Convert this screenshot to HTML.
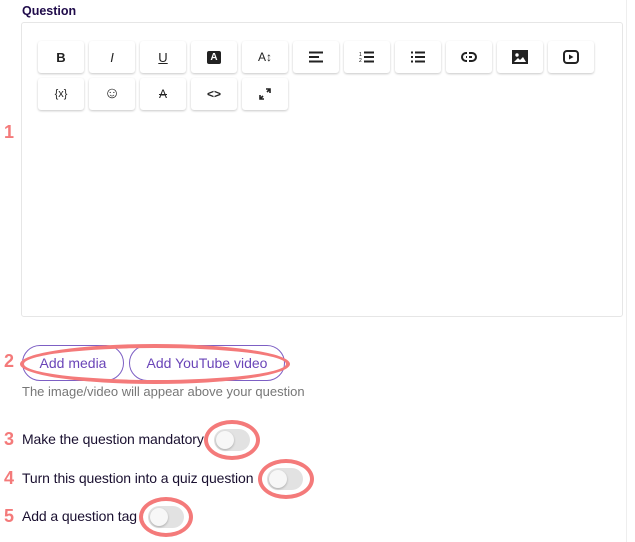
<!DOCTYPE html>
<html><head><style>
body{margin:0;width:635px;height:542px;background:#fff;font-family:"Liberation Sans",Arial,sans-serif;position:relative;overflow:hidden}
.a{position:absolute}
.lbl{left:22px;top:4px;font-weight:bold;font-size:12.5px;color:#1f0b4a}
.box{left:21px;top:22px;width:600px;height:293px;border:1px solid #e6e6e6;border-radius:3px}
.b{position:absolute;width:46px;height:32px;background:#fff;border-radius:3px;box-shadow:0 1px 2px rgba(0,0,0,.22);display:flex;align-items:center;justify-content:center;font-size:13px;color:#222}
.num{color:#f47a7a;font-weight:bold;font-size:18px;left:4px}
.pill{border:1px solid #7d5fc4;border-radius:18px;height:34px;color:#6a45b8;font-size:14px;display:flex;align-items:center;justify-content:center;top:345px}
.t{font-size:14px;color:#1a1030;left:22px;letter-spacing:-0.1px}
.tg{width:36px;height:22px;background:#e2e2e2;border-radius:11px}
.tg::after{content:"";position:absolute;left:2px;top:2px;width:18px;height:18px;border-radius:50%;background:#f7f7f7;box-shadow:0 1px 2px rgba(0,0,0,.25)}
.ring{border:4px solid #f47a7a;border-radius:50%}
</style></head><body>
<div class="a" style="left:626px;top:0;width:1px;height:542px;background:#eee"></div>
<div class="a lbl">Question</div>
<div class="a box"></div>
<div class="b" style="left:38px;top:41px;font-weight:bold">B</div>
<div class="b" style="left:89px;top:41px;font-style:italic">I</div>
<div class="b" style="left:140px;top:41px;text-decoration:underline">U</div>
<div class="b" style="left:191px;top:41px"><span style="background:#222;color:#fff;font-weight:bold;font-size:10px;padding:1px 3px;border-radius:2px">A</span></div>
<div class="b" style="left:242px;top:41px;font-size:12px">A↕</div>
<div class="b" style="left:293px;top:41px"><svg width="16" height="12"><path d="M1 1.5h14M1 6h10M1 10.5h14" stroke="#222" stroke-width="2"/></svg></div>
<div class="b" style="left:344px;top:41px"><svg width="16" height="12"><path d="M5 1.5h10M5 6h10M5 10.5h10" stroke="#222" stroke-width="2"/><text x="0" y="5" font-size="5">1</text><text x="0" y="11" font-size="5">2</text></svg></div>
<div class="b" style="left:395px;top:41px"><svg width="16" height="12"><path d="M5 1.5h10M5 6h10M5 10.5h10M1 1.5h2M1 6h2M1 10.5h2" stroke="#222" stroke-width="2"/></svg></div>
<div class="b" style="left:446px;top:41px"><svg width="16" height="10"><rect x="1" y="1" width="14" height="8" rx="4" fill="none" stroke="#222" stroke-width="2"/><path d="M5 5h6" stroke="#222" stroke-width="2"/><path d="M7 0v10" stroke="#fff" stroke-width="2"/></svg></div>
<div class="b" style="left:497px;top:41px"><svg width="16" height="14"><rect width="16" height="14" fill="#222"/><circle cx="5" cy="5" r="1.7" fill="#fff"/><path d="M2 12l4-4 2 2 3-3 3 5z" fill="#fff"/></svg></div>
<div class="b" style="left:548px;top:41px"><svg width="16" height="14"><rect x="1" y="1" width="14" height="12" rx="3" fill="none" stroke="#222" stroke-width="2"/><path d="M6 4.5l4.5 2.5-4.5 2.5z" fill="#222"/></svg></div>
<div class="b" style="left:38px;top:78px;font-size:11px">{x}</div>
<div class="b" style="left:89px;top:78px;font-size:16px;font-weight:bold">☺</div>
<div class="b" style="left:140px;top:78px;font-size:12px;text-decoration:line-through">A</div>
<div class="b" style="left:191px;top:78px;font-weight:bold;font-size:12px">&lt;&gt;</div>
<div class="b" style="left:242px;top:78px"><svg width="14" height="14"><path d="M2 12l3-3M12 2l-3 3M8 2h4v4M2 8v4h4" stroke="#222" stroke-width="1.6" fill="none"/></svg></div>
<div class="a num" style="top:122px">1</div>
<div class="a num" style="top:351px">2</div>
<div class="a pill" style="left:22px;width:100px">Add media</div>
<div class="a pill" style="left:129px;width:154px">Add YouTube video</div>
<div class="a ring" style="left:20px;top:344px;width:262px;height:32px"></div>
<div class="a" style="left:22px;top:384px;font-size:13px;color:#777">The image/video will appear above your question</div>
<div class="a num" style="top:429px">3</div>
<div class="a t" style="top:431px">Make the question mandatory</div>
<div class="a tg" style="left:214px;top:429px"></div>
<div class="a ring" style="left:204px;top:420px;width:48px;height:32px"></div>
<div class="a num" style="top:468px">4</div>
<div class="a t" style="top:470px">Turn this question into a quiz question</div>
<div class="a tg" style="left:267px;top:468px"></div>
<div class="a ring" style="left:258px;top:459px;width:48px;height:32px"></div>
<div class="a num" style="top:506px">5</div>
<div class="a t" style="top:508px">Add a question tag</div>
<div class="a tg" style="left:148px;top:506px"></div>
<div class="a ring" style="left:139px;top:497px;width:46px;height:32px"></div>
</body></html>
